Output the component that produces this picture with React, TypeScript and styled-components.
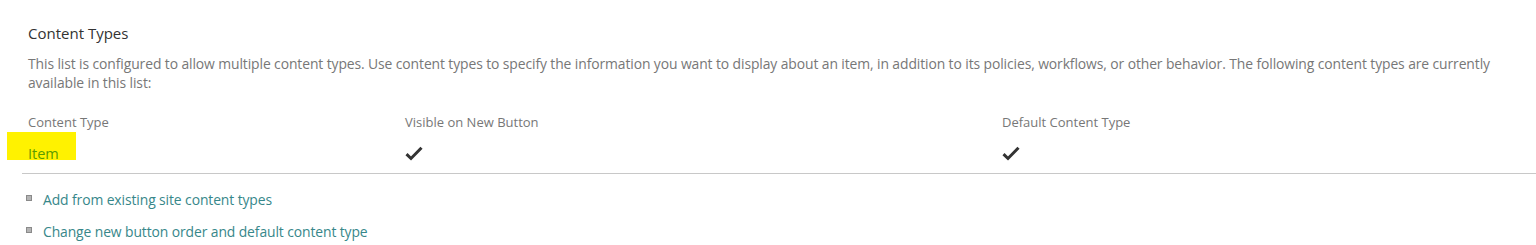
import styled, { createGlobalStyle } from "styled-components";

const GlobalStyle = createGlobalStyle`
	html, body {
		margin: 0;
		padding: 0;
		background: #fff;
	}

	body {
		font-family: "Open Sans", "Noto Sans", sans-serif;
		color: #444;
	}
`;

const Page = styled.div`
	width: 1536px;
	height: 245px;
	overflow: hidden;
	padding: 23px 0 0 28px;
	box-sizing: border-box;
`;

const Title = styled.h2`
	margin: 0;
	font-size: 15px;
	font-weight: 400;
	color: #333;
	line-height: 20px;
`;

const Description = styled.p`
	margin: 11px 0 0;
	font-size: 13.9px;
	line-height: 19px;
	color: #777;
	max-width: 1500px;
	letter-spacing: -0.1px;
`;

const Table = styled.div`
	margin: 18px 0 0 -6px;
	border-bottom: 1px solid #c8c8c8;
	padding-left: 6px;
`;

const Row = styled.div<{ $h: number }>`
	display: grid;
	grid-template-columns: 377px 597px 1fr;
	align-items: center;
	height: ${(p) => p.$h}px;
`;

const HeadCell = styled.div`
	font-size: 13px;
	color: #777;
`;

const Cell = styled.div`
	position: relative;
	display: flex;
	align-items: center;
`;

const Highlight = styled.span`
	position: absolute;
	left: -21px;
	top: -12px;
	width: 69px;
	height: 28px;
	background: #fff200;
	z-index: 0;
`;

const ItemName = styled.a`
	position: relative;
	z-index: 1;
	font-size: 14.5px;
	color: #5a9b00;
	text-decoration: none;
`;

const Links = styled.ul`
	list-style: none;
	margin: 16px 0 0;
	padding: 0;
	display: flex;
	flex-direction: column;
	gap: 13px;
`;

const LinkItem = styled.li`
	display: flex;
	align-items: center;
	gap: 11px;
	height: 19px;
`;

const Bullet = styled.span`
	width: 4px;
	height: 4px;
	background: #b4b4b4;
	border: 1px solid #8a8a8a;
	margin-left: -2px;
	margin-top: -3px;
`;

const Link = styled.a`
	font-size: 13.9px;
	color: #37878a;
	text-decoration: none;
	letter-spacing: -0.1px;
`;

const Check = () => (
	<svg width="18" height="15" viewBox="0 0 18 15">
		<path d="M1.5 8.2 L6 12.5 L16.5 1.8" fill="none" stroke="#333" strokeWidth="3" />
	</svg>
);

const App = () => {
	return (
		<Page>
			<GlobalStyle />
			<Title>Content Types</Title>
			<Description>
				This list is configured to allow multiple content types. Use content types to specify the information you want to display about an item, in addition to its policies, workflows, or other behavior. The following content types are currently available in this list:
			</Description>
			<Table>
				<Row $h={24}>
					<HeadCell>Content Type</HeadCell>
					<HeadCell>Visible on New Button</HeadCell>
					<HeadCell>Default Content Type</HeadCell>
				</Row>
				<Row $h={39}>
					<Cell>
						<Highlight />
						<ItemName href="#">Item</ItemName>
					</Cell>
					<Cell>
						<Check />
					</Cell>
					<Cell>
						<Check />
					</Cell>
				</Row>
			</Table>
			<Links>
				<LinkItem>
					<Bullet />
					<Link href="#">Add from existing site content types</Link>
				</LinkItem>
				<LinkItem>
					<Bullet />
					<Link href="#">Change new button order and default content type</Link>
				</LinkItem>
			</Links>
		</Page>
	);
};

export default App;
